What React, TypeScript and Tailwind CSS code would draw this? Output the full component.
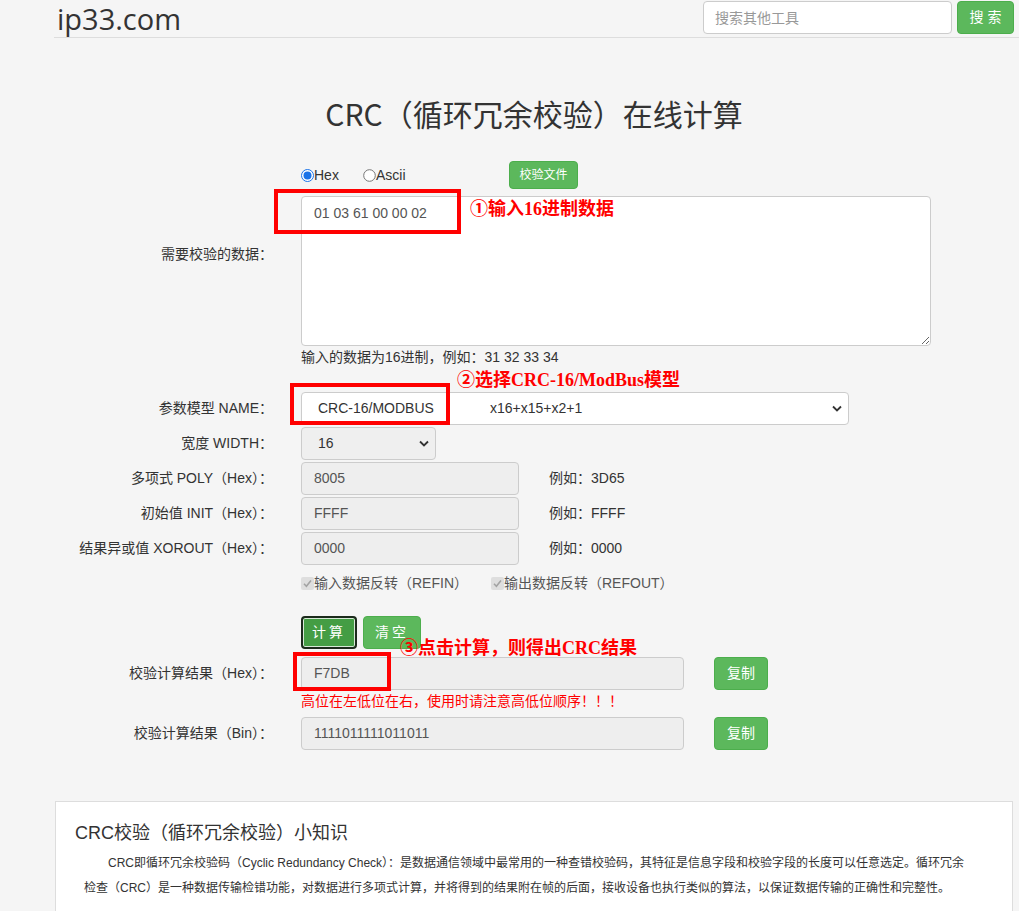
import React from "react";

const sans = "font-['Liberation_Sans','Noto_Sans_CJK_SC',sans-serif]";
const mark = "font-['Liberation_Serif','Noto_Sans_CJK_SC',serif]";

const Chevron: React.FC = () => (
  <svg width="10" height="7" viewBox="0 0 10 7" className="shrink-0">
    <path d="M1 1.5 L5 5.5 L9 1.5" fill="none" stroke="#333" strokeWidth="1.8" />
  </svg>
);

const Radio: React.FC<{ checked?: boolean }> = ({ checked }) => (
  <svg width="13" height="13" viewBox="0 0 13 13" className="shrink-0">
    {checked ? (
      <>
        <circle cx="6.5" cy="6.5" r="6" fill="#fff" stroke="#1a73e8" strokeWidth="1" />
        <circle cx="6.5" cy="6.5" r="4" fill="#1a73e8" />
      </>
    ) : (
      <circle cx="6.5" cy="6.5" r="5.8" fill="#fff" stroke="#767676" strokeWidth="1" />
    )}
  </svg>
);

const Check: React.FC = () => (
  <svg width="13" height="13" viewBox="0 0 13 13" className="shrink-0">
    <rect x="0" y="0" width="13" height="13" rx="2" fill="#dedede" />
    <path d="M3 6.8 L5.4 9.2 L10 3.6" fill="none" stroke="#a3a3a3" strokeWidth="1.6" />
  </svg>
);

// one form row: right aligned label + field
const Row: React.FC<{ label: string; className?: string; children: React.ReactNode }> = ({
  label,
  className = "",
  children,
}) => (
  <div className={`flex items-center ${className}`}>
    <div className="w-[218px] shrink-0 text-right text-[14px] text-[#333]">{label}</div>
    <div className="ml-[28px] flex items-center">{children}</div>
  </div>
);

const ReadInput: React.FC<{ value: string; width: string }> = ({ value, width }) => (
  <div
    className={`flex h-[33px] items-center rounded-[4px] border border-[#ccc] bg-[#eee] pl-[12px] text-[14px] text-[#555] ${width}`}
  >
    {value}
  </div>
);

const GreenButton: React.FC<{ children: React.ReactNode; className?: string }> = ({
  children,
  className = "",
}) => (
  <button
    className={`flex items-center justify-center rounded-[4px] border border-[#4cae4c] bg-[#5cb85c] text-white ${className}`}
  >
    {children}
  </button>
);

const App: React.FC = () => {
  return (
    <div className={`relative min-h-[911px] overflow-hidden bg-[#f5f5f5] ${sans}`}>
      {/* header */}
      <div className="ml-[54px] flex h-[38px] items-start justify-between border-b border-[#ddd] pr-[5px]">
        <div className="ml-[3px] font-['Open_Sans',sans-serif] text-[29px] leading-[37px] text-[#333]">
          ip33.com
        </div>
        <div className="mt-px flex">
          <input
            className="h-[33px] w-[249px] rounded-[4px] border border-[#ccc] bg-white px-[11px] text-[14px] text-[#555] placeholder:text-[#999] outline-none"
            placeholder="搜索其他工具"
          />
          <GreenButton className="ml-[5px] h-[33px] w-[57px] text-[14px]">搜 索</GreenButton>
        </div>
      </div>

      {/* title */}
      <h1 className="ml-[55px] mr-[6px] mt-[55px] text-center text-[30px] leading-[40px] text-[#333] font-['Noto_Sans_CJK_SC',sans-serif]">
        CRC（循环冗余校验）在线计算
      </h1>

      {/* form */}
      <div className="pl-[55px]">
        <Row label="" className="mt-[28px] h-[28px]">
          <span className="flex w-[62px] items-center text-[14px] text-[#333]">
            <Radio checked />
            Hex
          </span>
          <span className="flex w-[146px] items-center text-[14px] text-[#333]">
            <Radio />
            Ascii
          </span>
          <GreenButton className="h-[28px] w-[69px] text-[12px]">校验文件</GreenButton>
        </Row>

        <div className="mt-[7px] flex items-start">
          <div className="w-[218px] shrink-0 pt-[48px] text-right text-[14px] text-[#333]">
            需要校验的数据：
          </div>
          <div className="ml-[28px]">
            <textarea
              className="block h-[150px] w-[630px] resize rounded-[4px] border border-[#ccc] bg-white px-[12px] pt-[6px] text-[14px] leading-[20px] text-[#555] outline-none"
              defaultValue="01 03 61 00 00 02"
            />
            <div className="mt-[1px] text-[14px] leading-[20px] text-[#333]">
              输入的数据为16进制，例如：31 32 33 34
            </div>
          </div>
        </div>

        <Row label="参数模型 NAME：" className="mt-[25px]">
          <div className="flex h-[33px] w-[548px] items-center rounded-[4px] border border-[#ccc] bg-white pl-[16px] pr-[6px] text-[14px] text-[#333]">
            <span className="w-[172px]">CRC-16/MODBUS</span>
            <span className="flex-1">x16+x15+x2+1</span>
            <Chevron />
          </div>
        </Row>

        <Row label="宽度 WIDTH：" className="mt-[2px]">
          <div className="flex h-[33px] w-[135px] items-center rounded-[4px] border border-[#ccc] bg-[#efefef] pl-[16px] pr-[6px] text-[14px] text-[#333]">
            <span className="flex-1">16</span>
            <Chevron />
          </div>
        </Row>

        <Row label="多项式 POLY（Hex）：" className="mt-[2px]">
          <ReadInput value="8005" width="w-[218px]" />
          <span className="ml-[30px] text-[14px] text-[#333]">例如：3D65</span>
        </Row>

        <Row label="初始值 INIT（Hex）：" className="mt-[2px]">
          <ReadInput value="FFFF" width="w-[218px]" />
          <span className="ml-[30px] text-[14px] text-[#333]">例如：FFFF</span>
        </Row>

        <Row label="结果异或值 XOROUT（Hex）：" className="mt-[2px]">
          <ReadInput value="0000" width="w-[218px]" />
          <span className="ml-[30px] text-[14px] text-[#333]">例如：0000</span>
        </Row>

        <Row label="" className="mt-[8px] h-[20px]">
          <span className="flex w-[190px] items-center text-[14px] text-[#555]">
            <Check />
            输入数据反转（REFIN）
          </span>
          <span className="flex items-center text-[14px] text-[#555]">
            <Check />
            输出数据反转（REFOUT）
          </span>
        </Row>

        <Row label="" className="mt-[23px]">
          <button className="flex h-[33px] w-[56px] items-center justify-center rounded-[4px] border-2 border-[#1c2a1c] bg-[#449d44] text-[14px] tracking-[3px] text-white shadow-[inset_0_0_0_1px_#d6e9d6]">
            计算
          </button>
          <GreenButton className="ml-[6px] h-[33px] w-[58px] text-[14px] tracking-[3px]">清空</GreenButton>
        </Row>

        <Row label="校验计算结果（Hex）：" className="mt-[8px]">
          <ReadInput value="F7DB" width="w-[383px]" />
          <GreenButton className="ml-[30px] h-[33px] w-[54px] text-[14px]">复制</GreenButton>
        </Row>

        <Row label="" className="mt-[1px] h-[20px]">
          <span className="text-[14px] text-[#f00]">高位在左低位在右，使用时请注意高低位顺序！！！</span>
        </Row>

        <Row label="校验计算结果（Bin）：" className="mt-[6px]">
          <ReadInput value="1111011111011011" width="w-[383px]" />
          <GreenButton className="ml-[30px] h-[33px] w-[54px] text-[14px]">复制</GreenButton>
        </Row>
      </div>

      {/* knowledge card */}
      <div className="ml-[55px] mr-[6px] mt-[51px] border border-[#ddd] bg-white pb-[20px] pl-[19px] pt-[18px]">
        <h2 className="text-[18px] leading-[26px] text-[#333]">CRC校验（循环冗余校验）小知识</h2>
        <p className="mt-[5px] pl-[9px] text-[12px] leading-[25px] text-[#333]">
          <span className="block whitespace-nowrap indent-[24px]">
            CRC即循环冗余校验码（Cyclic Redundancy Check）：是数据通信领域中最常用的一种查错校验码，其特征是信息字段和校验字段的长度可以任意选定。循环冗余
          </span>
          <span className="block whitespace-nowrap">
            检查（CRC）是一种数据传输检错功能，对数据进行多项式计算，并将得到的结果附在帧的后面，接收设备也执行类似的算法，以保证数据传输的正确性和完整性。
          </span>
        </p>
      </div>

      {/* red screenshot annotations */}
      <div className="absolute left-[274px] top-[189px] h-[45px] w-[187px] border-[4px] border-[#f00]" />
      <div className={`absolute left-[470px] top-[197px] text-[18px] font-bold leading-[24px] text-[#f00] ${mark}`}>
        ①输入16进制数据
      </div>

      <div className="absolute left-[290px] top-[383px] h-[42px] w-[160px] border-[4px] border-[#f00]" />
      <div className={`absolute left-[457px] top-[368px] text-[18px] font-bold leading-[24px] text-[#f00] ${mark}`}>
        ②选择CRC-16/ModBus模型
      </div>

      <div className="absolute left-[293px] top-[652px] h-[39px] w-[98px] border-[4px] border-[#f00]" />
      <div className={`absolute left-[400px] top-[636px] text-[18px] font-bold leading-[24px] text-[#f00] ${mark}`}>
        ③点击计算，则得出CRC结果
      </div>
    </div>
  );
};

export default App;
